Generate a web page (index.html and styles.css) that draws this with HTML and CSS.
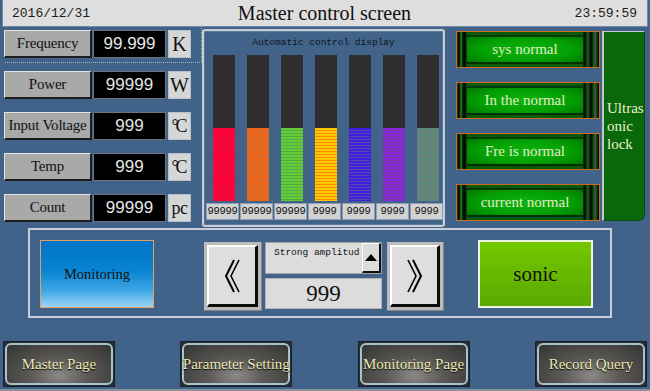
FILE: index.html
```html
<!DOCTYPE html>
<html lang="en">
<head>
<meta charset="utf-8">
<title>Master control screen</title>
<link rel="stylesheet" href="styles.css">
</head>
<body>
<div class="screen">
	<div class="topbar">
		<span class="date">2016/12/31</span>
		<span class="title">Master control screen</span>
		<span class="time">23:59:59</span>
	</div>

	<div class="main">
		<div class="params">
			<div class="row selected">
				<div class="label">Frequency</div>
				<div class="value">99.999</div>
				<div class="unit">K</div>
			</div>
			<div class="row">
				<div class="label">Power</div>
				<div class="value">99999</div>
				<div class="unit">W</div>
			</div>
			<div class="row">
				<div class="label">Input Voltage</div>
				<div class="value">999</div>
				<div class="unit deg">°C</div>
			</div>
			<div class="row">
				<div class="label">Temp</div>
				<div class="value">999</div>
				<div class="unit deg">°C</div>
			</div>
			<div class="row">
				<div class="label">Count</div>
				<div class="value">99999</div>
				<div class="unit pc">pc</div>
			</div>
		</div>

		<div class="chart">
			<div class="chart-title">Automatic control display</div>
			<div class="bars">
				<div class="bar"><div class="fill red" style="height:73px"></div></div>
				<div class="bar"><div class="fill orange" style="height:73px"></div></div>
				<div class="bar"><div class="fill green" style="height:73px"></div></div>
				<div class="bar"><div class="fill yellow" style="height:73px"></div></div>
				<div class="bar"><div class="fill blue" style="height:73px"></div></div>
				<div class="bar"><div class="fill purple" style="height:73px"></div></div>
				<div class="bar"><div class="fill teal" style="height:73px"></div></div>
			</div>
			<div class="bar-values">
				<span>99999</span>
				<span>99999</span>
				<span>99999</span>
				<span>9999</span>
				<span>9999</span>
				<span>9999</span>
				<span>9999</span>
			</div>
		</div>

		<div class="status">
			<div class="status-list">
				<div class="green-btn"><span>sys normal</span></div>
				<div class="green-btn"><span>In the normal</span></div>
				<div class="green-btn"><span>Fre is normal</span></div>
				<div class="green-btn"><span>current normal</span></div>
			</div>
			<div class="lock">Ultras<br>onic<br>lock</div>
		</div>
	</div>

	<div class="control">
		<div class="monitor-btn">Monitoring</div>
		<div class="arrow-btn">
			<div class="arrow-face">
				<svg width="18" height="34" viewBox="0 0 18 34">
					<polyline points="11,1 3,17 11,33" fill="none" stroke="#000" stroke-width="2"/>
					<polyline points="16,1 8,17 16,33" fill="none" stroke="#000" stroke-width="1.6"/>
				</svg>
			</div>
		</div>
		<div class="amp">
			<div class="amp-select">
				<span class="amp-text">Strong amplitud</span>
				<span class="amp-arrow"><span class="tri"></span></span>
			</div>
			<div class="amp-value">999</div>
		</div>
		<div class="arrow-btn">
			<div class="arrow-face">
				<svg width="18" height="34" viewBox="0 0 18 34">
					<polyline points="2,1 10,17 2,33" fill="none" stroke="#000" stroke-width="1.6"/>
					<polyline points="7,1 15,17 7,33" fill="none" stroke="#000" stroke-width="2"/>
				</svg>
			</div>
		</div>
		<div class="sonic-btn">sonic</div>
	</div>

	<div class="nav">
		<div class="nav-btn"><span>Master Page</span></div>
		<div class="nav-btn"><span>Parameter Setting</span></div>
		<div class="nav-btn"><span>Monitoring Page</span></div>
		<div class="nav-btn"><span>Record Query</span></div>
	</div>
</div>
</body>
</html>
```

FILE: styles.css
```css
*{
	padding:0;
	margin:0;
	box-sizing: border-box;
}
body {
	width: 650px;
	height: 391px;
	overflow: hidden;
	background-color: #416389;
	font-family: "Liberation Serif", "Times New Roman", serif;
}
.screen {
	height: 391px;
	border-bottom: 2px solid #8c9299;
}

/* top bar */
.topbar {
	margin: 0 2px;
	height: 27px;
	border: 1px solid #6f88a4;
	border-top: none;
	background-color: #dedede;
	display: grid;
	grid-template-columns: 1fr auto 1fr;
	align-items: center;
	padding: 0 10px 0 9px;
	color: #1c1c1c;
}
.date, .time {
	font-family: "Liberation Mono", "DejaVu Sans Mono", monospace;
	font-size: 13px;
}
.time {
	justify-self: end;
}
.title {
	font-size: 20px;
	color: #111;
}

.main {
	display: flex;
	margin-top: 2px;
	height: 199px;
}

/* parameter rows */
.params {
	width: 198px;
	padding: 1px 0 0 4px;
	display: flex;
	flex-direction: column;
	gap: 13px;
}
.row {
	display: flex;
	height: 28px;
	position: relative;
}
.selected::after {
	content: "";
	position: absolute;
	left: 1px;
	right: -4px;
	top: -5px;
	bottom: -5px;
	border-right: 1px dotted #a8b4c0;
	border-bottom: 1px dotted #a8b4c0;
}
.label {
	width: 88px;
	background-color: #a9a9a9;
	border-top: 1px solid #e4e4e4;
	border-left: 1px solid #e4e4e4;
	border-right: 2px solid #1c1c1c;
	border-bottom: 2px solid #1c1c1c;
	font-size: 15px;
	color: #111;
	display: flex;
	align-items: center;
	justify-content: center;
	white-space: nowrap;
	letter-spacing: -0.2px;
}
.value {
	width: 73px;
	margin-left: 1px;
	background-color: #000;
	border: 1px solid #6c7480;
	color: #e6e6e6;
	font-family: "Liberation Sans", Arial, sans-serif;
	font-size: 17px;
	display: flex;
	align-items: center;
	justify-content: center;
}
.unit {
	width: 23px;
	margin-left: 2px;
	background-color: #d6d6d6;
	border: 1px solid #b8c0c8;
	font-size: 20px;
	color: #111;
	display: flex;
	align-items: center;
	justify-content: center;
	line-height: 1;
}
.unit.deg {
	font-size: 18px;
	letter-spacing: -3px;
	padding-right: 3px;
}
.unit.pc {
	font-size: 18px;
	letter-spacing: -0.5px;
}

/* chart */
.chart {
	width: 243px;
	height: 198px;
	margin-left: 4px;
	border: 2px solid #c7ced6;
	border-radius: 3px;
	box-shadow: inset 0 0 0 1px #5a7898;
}
.chart-title {
	margin-top: 6px;
	height: 12px;
	line-height: 12px;
	text-align: center;
	font-family: "Liberation Mono", "DejaVu Sans Mono", monospace;
	font-size: 9.5px;
	color: #0e1620;
}
.bars {
	display: flex;
	gap: 12px;
	padding-left: 9px;
	margin-top: 6px;
}
.bar {
	width: 22px;
	height: 146px;
	background-color: #2e2e2e;
	display: flex;
	flex-direction: column;
	justify-content: flex-end;
}
.fill {
	width: 100%;
}
.red { background: repeating-linear-gradient(#ff0032 0 2px, #e81040 2px 3px); }
.orange { background: repeating-linear-gradient(#ec6414 0 2px, #d4703a 2px 3px); }
.green { background: repeating-linear-gradient(#66cc3a 0 2px, #4fae48 2px 3px); }
.yellow { background: repeating-linear-gradient(#ffca00 0 2px, #ff8800 2px 3px); }
.blue { background: repeating-linear-gradient(#3a20e6 0 2px, #6048a0 2px 3px); }
.purple { background: repeating-linear-gradient(#8a26dc 0 2px, #6c3c98 2px 3px); }
.teal { background: repeating-linear-gradient(#5a8a7c 0 2px, #707c74 2px 3px); }
.bar-values {
	display: flex;
	gap: 1px;
	padding-left: 2px;
	margin-top: 2px;
}
.bar-values span {
	width: 33px;
	height: 17px;
	background-color: #d2d2d2;
	border: 1px solid #8fa0b4;
	font-family: "Liberation Mono", "DejaVu Sans Mono", monospace;
	font-size: 10.5px;
	line-height: 15px;
	text-align: center;
	color: #111;
	letter-spacing: -0.3px;
	overflow: hidden;
}

/* status */
.status {
	display: flex;
	margin-left: 11px;
	padding-top: 2px;
}
.status-list {
	width: 144px;
	display: flex;
	flex-direction: column;
	gap: 14px;
}
.green-btn {
	height: 37px;
	border: 1px solid #cc6c1e;
	padding: 3px 0;
	display: flex;
	background: linear-gradient(90deg, #1a4a1a 0, #000 2px, #2c7a2c 4px, #001a00 6px, #000 8px, #0b5a0b 10px, #0b5a0b calc(100% - 16px), #000 calc(100% - 15px), #1a5e1a calc(100% - 11px), #000 calc(100% - 8px), #2a6e2a calc(100% - 4px), #000 100%);
}
.green-btn span {
	flex: 1;
	margin: 0 16px 0 10px;
	background: radial-gradient(ellipse at 50% 50%, #0cb40c 0%, #04a004 55%, #007000 100%);
	box-shadow: inset 0 2px 0 #003c00, inset 0 -2px 0 #003000;
	display: flex;
	align-items: center;
	justify-content: center;
	color: #e2ecc6;
	font-size: 15px;
	white-space: nowrap;
}
.lock {
	width: 43px;
	height: 190px;
	margin-left: 2px;
	background-color: #08680a;
	border: 1px solid #0a4a0a;
	border-left: 2px solid #c2cad0;
	border-top: 1px solid #c2cad0;
	border-bottom-right-radius: 7px;
	color: #f0f0cc;
	font-size: 15px;
	line-height: 18px;
	display: flex;
	align-items: center;
	padding-left: 3px;
}

/* control strip */
.control {
	margin-left: 28px;
	width: 584px;
	height: 90px;
	border: 2px solid #c7ced6;
	display: flex;
	align-items: flex-start;
	padding-left: 10px;
}
.monitor-btn {
	width: 114px;
	height: 68px;
	margin-top: 10px;
	border: 1px solid #e6a05a;
	background: linear-gradient(#0074c6 0%, #0884d2 45%, #3ea6e4 75%, #9ed6f8 100%);
	display: flex;
	align-items: center;
	justify-content: center;
	font-size: 14.5px;
	color: #111;
}
.arrow-btn {
	width: 58px;
	height: 69px;
	margin-top: 12px;
	margin-left: 50px;
	background-color: #bcbcbc;
	padding: 3px;
	border-right: 1px solid #888;
	border-bottom: 1px solid #888;
}
.arrow-btn + .amp + .arrow-btn {
	margin-left: 5px;
	width: 57px;
}
.arrow-face {
	height: 100%;
	background-color: #dedede;
	border-top: 2px solid #fff;
	border-left: 2px solid #fff;
	border-right: 3px solid #0c0c0c;
	border-bottom: 3px solid #0c0c0c;
	display: flex;
	align-items: center;
	justify-content: center;
}
.amp {
	width: 117px;
	margin-top: 12px;
	margin-left: 3px;
}
.amp-select {
	height: 32px;
	display: flex;
	background-color: #dcdcdc;
	border: 1px solid #a4a4a4;
}
.amp-text {
	flex: 1;
	font-family: "Liberation Mono", "DejaVu Sans Mono", monospace;
	font-size: 9.5px;
	color: #111;
	padding: 4px 0 0 8px;
	white-space: nowrap;
	overflow: hidden;
}
.amp-arrow {
	width: 19px;
	border-top: 1px solid #fff;
	border-left: 1px solid #fff;
	border-right: 2px solid #111;
	border-bottom: 2px solid #111;
	display: flex;
	align-items: center;
	justify-content: center;
}
.tri {
	width: 0;
	height: 0;
	border-left: 6px solid transparent;
	border-right: 6px solid transparent;
	border-bottom: 7px solid #000;
}
.amp-value {
	height: 31px;
	margin-top: 4px;
	background-color: #dcdcdc;
	border: 1px solid #b4b4b4;
	font-size: 23px;
	line-height: 29px;
	text-align: center;
	color: #111;
}
.sonic-btn {
	width: 115px;
	height: 68px;
	margin-top: 10px;
	margin-left: 34px;
	border: 2px solid #eef4e4;
	background: linear-gradient(#74c800 0%, #66b800 50%, #5aaa00 100%);
	display: flex;
	align-items: center;
	justify-content: center;
	font-size: 21px;
	color: #111;
}

/* navigation */
.nav {
	display: flex;
	justify-content: space-between;
	padding: 0 3px;
	margin-top: 23px;
}
.nav-btn {
	width: 112px;
	height: 46px;
	border: 1px solid #142030;
	background-color: #2c2e32;
	padding: 1px;
}
.nav-btn span {
	height: 100%;
	display: flex;
	align-items: center;
	justify-content: center;
	border: 2px solid #a6c2ca;
	border-radius: 6px;
	background: radial-gradient(ellipse at 50% 80%, #8c8a86 0%, #5a5854 40%, #343434 100%);
	color: #eeeab6;
	font-size: 15px;
	white-space: nowrap;
	text-shadow: 0 1px 1px #000;
}
```
